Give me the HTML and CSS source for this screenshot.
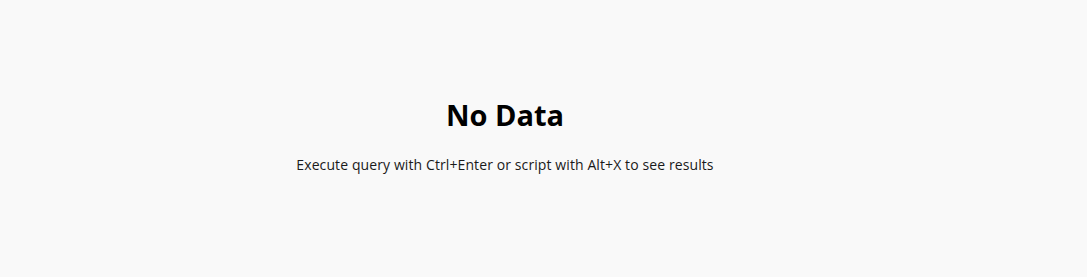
FILE: index.html
```html
<!DOCTYPE html>
<html lang="en">
<head>
<meta charset="utf-8">
<title>No Data</title>
<link rel="stylesheet" href="styles.css">
</head>
<body>
<main class="results">
  <section class="empty-state">
    <h1 class="empty-title">No Data</h1>
    <p class="empty-hint">Execute query with Ctrl+Enter or script with Alt+X to see results</p>
  </section>
</main>
</body>
</html>
```

FILE: styles.css
```css
html, body {
  margin: 0;
  height: 100%;
  background: #f9f9f9;
}

body {
  font-family: "Open Sans", "Noto Sans", "Liberation Sans", sans-serif;
  color: #000;
}

.results {
  height: 100%;
  box-sizing: border-box;
  padding: 95px 77px 0 0;
}

.empty-state {
  display: flex;
  flex-direction: column;
  align-items: center;
  gap: 21px;
}

.empty-title {
  margin: 0;
  font-size: 29px;
  font-weight: 700;
  line-height: 39px;
}

.empty-hint {
  margin: 0;
  font-size: 14px;
  line-height: 19px;
  letter-spacing: 0.1px;
  color: #1a1a1a;
}
```
